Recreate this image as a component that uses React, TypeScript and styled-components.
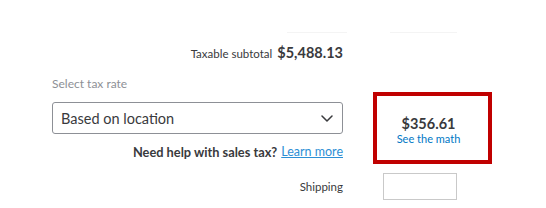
import styled, { createGlobalStyle } from "styled-components";

const GlobalStyle = createGlobalStyle`
  html, body {
    margin: 0;
    padding: 0;
    background: #ffffff;
  }
  body {
    font-family: "Lato", "Noto Sans", sans-serif;
    color: #393a3d;
  }
`;

const Page = styled.div`
  width: 546px;
  height: 208px;
  padding-top: 32px;
  box-sizing: border-box;
  overflow: hidden;
`;

const Strip = styled.div`
  display: flex;
  gap: 43px;
  padding-left: 287px;
  height: 1px;
`;

const FaintLine = styled.div<{ $w: number }>`
  width: ${(p) => p.$w}px;
  height: 1px;
  background: #f4f4f4;
`;

const Grid = styled.div`
  display: grid;
  grid-template-columns: 291px 119px;
  column-gap: 30px;
  padding-left: 52px;
`;

const SubtotalRow = styled.div`
  grid-column: 1;
  display: flex;
  justify-content: flex-end;
  align-items: baseline;
  gap: 5px;
  height: 20px;
  line-height: 20px;
  margin-top: 10px;
`;

const SubtotalLabel = styled.span`
  font-size: 11.5px;
  color: #393a3d;
`;

const SubtotalAmount = styled.span`
  font-size: 14.5px;
  font-weight: 700;
  color: #393a3d;
`;

const LeftColumn = styled.div`
  display: flex;
  flex-direction: column;
  margin-top: 13px;
`;

const FieldLabel = styled.div`
  font-size: 12px;
  line-height: 16px;
  color: #8d9096;
`;

const SelectBox = styled.div`
  margin-top: 10px;
  height: 32px;
  box-sizing: border-box;
  border: 1px solid #8d9096;
  border-radius: 3px;
  display: flex;
  align-items: center;
  justify-content: space-between;
  padding: 0 9px 0 8px;
  font-size: 14.5px;
  color: #393a3d;
`;

const HelpRow = styled.div`
  margin-top: 10px;
  display: flex;
  justify-content: flex-end;
  gap: 4px;
  font-size: 12.8px;
  line-height: 16px;
  font-weight: 700;
  color: #393a3d;
`;

const Link = styled.a`
  color: #2d8fd5;
  text-decoration: underline;
  font-weight: 400;
  font-size: 12.5px;
  cursor: pointer;
`;

const RightColumn = styled.div`
  margin-top: 29px;
`;

const HighlightBox = styled.div`
  height: 72px;
  box-sizing: border-box;
  border: 4px solid #c00000;
  display: flex;
  flex-direction: column;
  align-items: center;
  justify-content: center;
  padding-right: 8px;
  padding-top: 4px;
`;

const TaxAmount = styled.div`
  font-size: 14.5px;
  font-weight: 700;
  line-height: 17px;
  color: #393a3d;
`;

const MathLink = styled.a`
  font-size: 11px;
  line-height: 14px;
  color: #0077c5;
  cursor: pointer;
`;

const ShippingLabel = styled.div`
  margin-top: 9px;
  display: flex;
  justify-content: flex-end;
  align-items: center;
  font-size: 11.5px;
  color: #393a3d;
  height: 27px;
`;

const ShippingInput = styled.div`
  margin-top: 9px;
  margin-left: 10px;
  width: 74px;
  height: 27px;
  box-sizing: border-box;
  border: 1px solid #c9c9c9;
`;

const Chevron = () => (
  <svg width="12" height="7" viewBox="0 0 12 7" fill="none">
    <path d="M1 1l5 5 5-5" stroke="#393a3d" strokeWidth="1.5" strokeLinecap="round" strokeLinejoin="round" />
  </svg>
);

export default function App() {
  return (
    <Page>
      <GlobalStyle />
      <Strip>
        <FaintLine $w={60} />
        <FaintLine $w={67} />
      </Strip>
      <Grid>
        <SubtotalRow>
          <SubtotalLabel>Taxable subtotal</SubtotalLabel>
          <SubtotalAmount>$5,488.13</SubtotalAmount>
        </SubtotalRow>
        <div />
        <LeftColumn>
          <FieldLabel>Select tax rate</FieldLabel>
          <SelectBox>
            <span>Based on location</span>
            <Chevron />
          </SelectBox>
          <HelpRow>
            <span>Need help with sales tax?</span>
            <Link>Learn more</Link>
          </HelpRow>
        </LeftColumn>
        <RightColumn>
          <HighlightBox>
            <TaxAmount>$356.61</TaxAmount>
            <MathLink>See the math</MathLink>
          </HighlightBox>
        </RightColumn>
        <ShippingLabel>Shipping</ShippingLabel>
        <ShippingInput />
      </Grid>
    </Page>
  );
}
